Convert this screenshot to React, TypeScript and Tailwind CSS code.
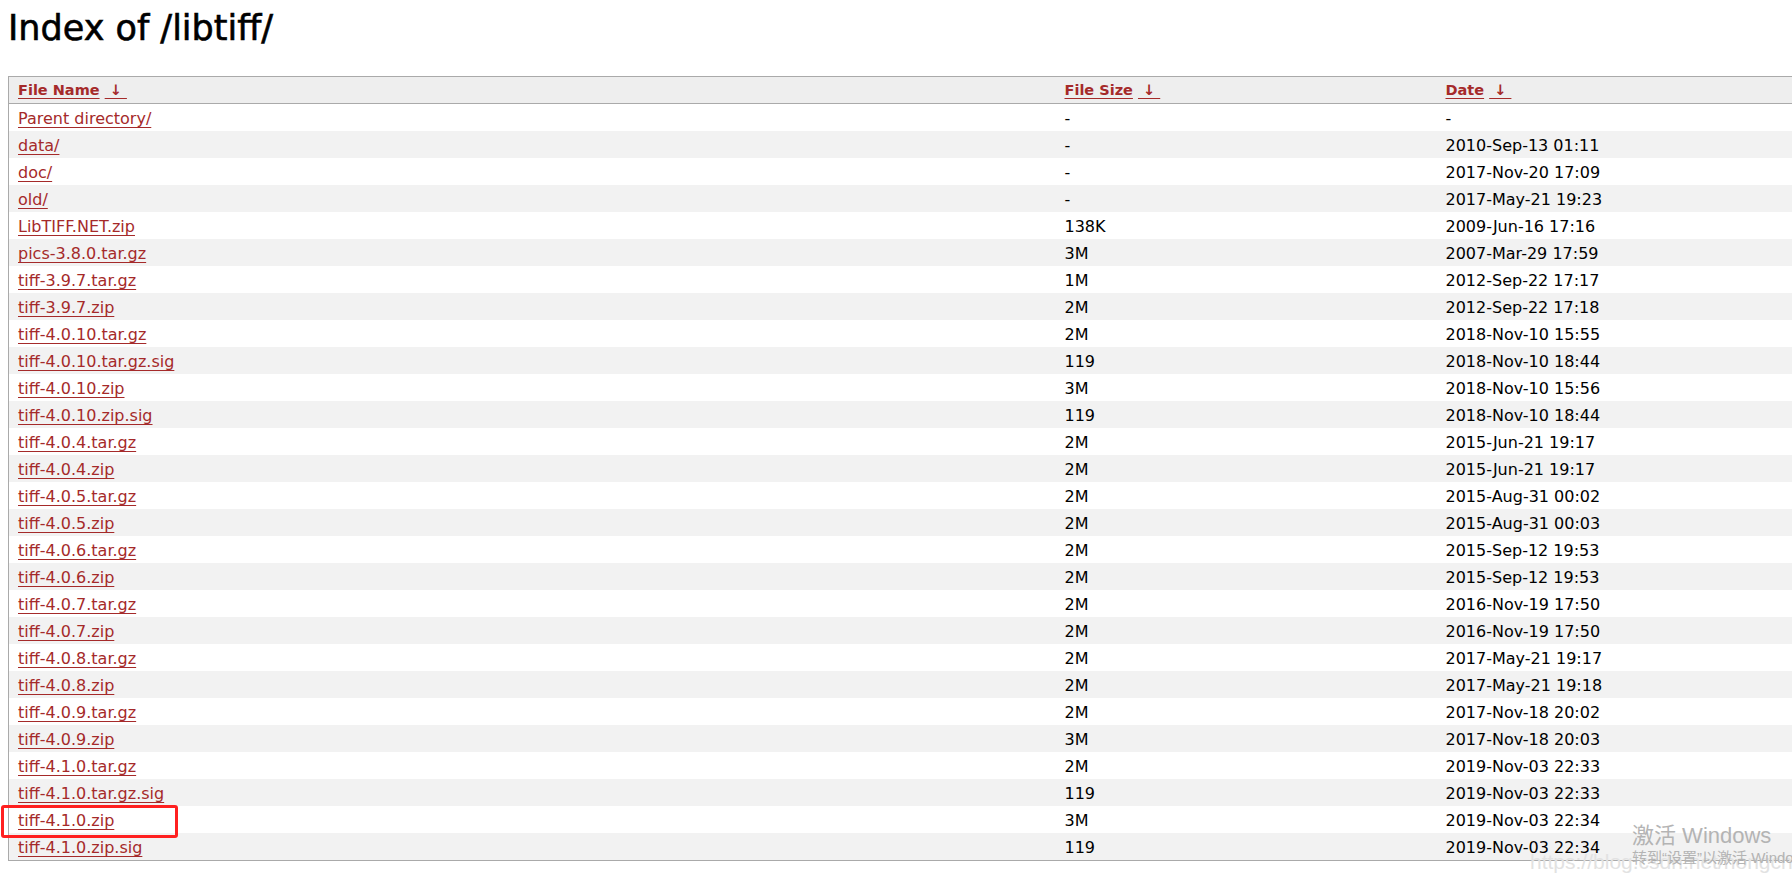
const rows: [string, string, string][] = [
  ["Parent directory/", "-", "-"],
  ["data/", "-", "2010-Sep-13 01:11"],
  ["doc/", "-", "2017-Nov-20 17:09"],
  ["old/", "-", "2017-May-21 19:23"],
  ["LibTIFF.NET.zip", "138K", "2009-Jun-16 17:16"],
  ["pics-3.8.0.tar.gz", "3M", "2007-Mar-29 17:59"],
  ["tiff-3.9.7.tar.gz", "1M", "2012-Sep-22 17:17"],
  ["tiff-3.9.7.zip", "2M", "2012-Sep-22 17:18"],
  ["tiff-4.0.10.tar.gz", "2M", "2018-Nov-10 15:55"],
  ["tiff-4.0.10.tar.gz.sig", "119", "2018-Nov-10 18:44"],
  ["tiff-4.0.10.zip", "3M", "2018-Nov-10 15:56"],
  ["tiff-4.0.10.zip.sig", "119", "2018-Nov-10 18:44"],
  ["tiff-4.0.4.tar.gz", "2M", "2015-Jun-21 19:17"],
  ["tiff-4.0.4.zip", "2M", "2015-Jun-21 19:17"],
  ["tiff-4.0.5.tar.gz", "2M", "2015-Aug-31 00:02"],
  ["tiff-4.0.5.zip", "2M", "2015-Aug-31 00:03"],
  ["tiff-4.0.6.tar.gz", "2M", "2015-Sep-12 19:53"],
  ["tiff-4.0.6.zip", "2M", "2015-Sep-12 19:53"],
  ["tiff-4.0.7.tar.gz", "2M", "2016-Nov-19 17:50"],
  ["tiff-4.0.7.zip", "2M", "2016-Nov-19 17:50"],
  ["tiff-4.0.8.tar.gz", "2M", "2017-May-21 19:17"],
  ["tiff-4.0.8.zip", "2M", "2017-May-21 19:18"],
  ["tiff-4.0.9.tar.gz", "2M", "2017-Nov-18 20:02"],
  ["tiff-4.0.9.zip", "3M", "2017-Nov-18 20:03"],
  ["tiff-4.1.0.tar.gz", "2M", "2019-Nov-03 22:33"],
  ["tiff-4.1.0.tar.gz.sig", "119", "2019-Nov-03 22:33"],
  ["tiff-4.1.0.zip", "3M", "2019-Nov-03 22:34"],
  ["tiff-4.1.0.zip.sig", "119", "2019-Nov-03 22:34"],
];

const linkCls = "text-[#a52a2a] underline decoration-1 underline-offset-[3px]";

function SortHead({ label }: { label: string }) {
  return (
    <th className="h-[26px] pl-[9px] text-left align-top text-[14.5px] font-bold leading-[26px]">
      <a href="#" className={linkCls}>{label}</a>{" "}
      <a href="#" className={linkCls}>{"\u00a0↓\u00a0"}</a>
    </th>
  );
}

export default function App() {
  return (
    <div className="relative h-[884px] w-[1792px] overflow-hidden bg-white font-['DejaVu_Sans',sans-serif] text-[16px] text-black">
      <h1 className="ml-2 mt-2 text-[35px] font-normal leading-[40px] [-webkit-text-stroke:0.6px_black]">Index of /libtiff/</h1>

      <table className="ml-2 mt-[28px] w-[1790px] table-fixed border-collapse border-b border-l border-[#aaa]">
        <colgroup>
          <col className="w-[1047px]" />
          <col className="w-[381px]" />
          <col />
        </colgroup>
        <thead>
          <tr className="border-y border-[#aaa] bg-[#eee]">
            <SortHead label="File Name" />
            <SortHead label="File Size" />
            <SortHead label="Date" />
          </tr>
        </thead>
        <tbody>
          {rows.map(([name, size, date], i) => (
            <tr key={name} className={i % 2 === 1 ? "bg-[#f2f2f2]" : "bg-white"}>
              <td className="h-[27px] pl-[9px] pt-[2px] align-top leading-[25px]">
                <a href="#" className={linkCls}>{name}</a>
              </td>
              <td className="h-[27px] pl-[9px] pt-[2px] align-top leading-[25px]">{size}</td>
              <td className="h-[27px] pl-[9px] pt-[2px] align-top leading-[25px]">{date}</td>
            </tr>
          ))}
        </tbody>
      </table>

      {/* highlight box drawn over the screenshot */}
      <div className="absolute left-[1px] top-[805px] h-[33px] w-[177px] rounded-[3px] border-[3px] border-[#ff2020]" />

      {/* watermarks */}
      <div className="pointer-events-none absolute left-[1530px] top-[850px] whitespace-nowrap font-['Liberation_Sans',sans-serif] text-[21px] leading-[24px] text-[#e2e2e2]">
        https://blog.csdn.net/hongchengwei5
      </div>
      <div className="pointer-events-none absolute left-[1632px] top-[823px] whitespace-nowrap font-['Liberation_Sans','Noto_Sans_CJK_SC',sans-serif] text-[#b4b4b4]">
        <div className="text-[22px] leading-[26px]">激活 Windows</div>
        <div className="text-[15px] leading-[18px]">转到“设置”以激活 Windows。</div>
      </div>
    </div>
  );
}
